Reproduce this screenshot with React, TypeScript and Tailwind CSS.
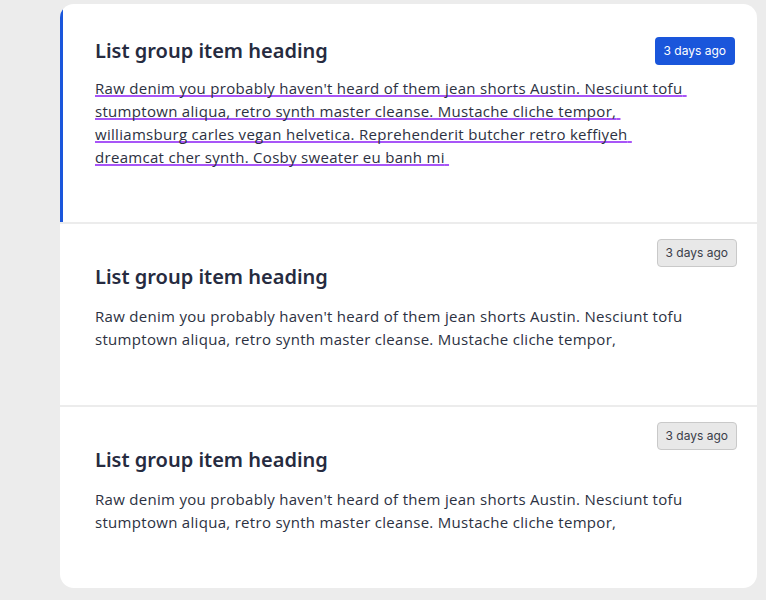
const body =
  "Raw denim you probably haven't heard of them jean shorts Austin. Nesciunt tofu";

type Item = {
  active?: boolean;
  lines: string[];
};

const items: Item[] = [
  {
    active: true,
    lines: [
      body,
      "stumptown aliqua, retro synth master cleanse. Mustache cliche tempor,",
      "williamsburg carles vegan helvetica. Reprehenderit butcher retro keffiyeh",
      "dreamcat cher synth. Cosby sweater eu banh mi",
    ],
  },
  {
    lines: [
      body,
      "stumptown aliqua, retro synth master cleanse. Mustache cliche tempor,",
    ],
  },
  {
    lines: [
      body,
      "stumptown aliqua, retro synth master cleanse. Mustache cliche tempor,",
    ],
  },
];

function Badge({ active }: { active?: boolean }) {
  if (active) {
    return (
      <span className="inline-block rounded-[4px] bg-[#1a56db] px-[9px] py-[6px] text-[12px] leading-4 text-white [font-family:Inter,sans-serif]">
        3 days ago
      </span>
    );
  }
  return (
    <span className="inline-block rounded-[4px] border border-[#c9c9c9] bg-[#e8e8e8] px-[8px] py-[5px] text-[12px] leading-4 text-[#3a3d4a] [font-family:Inter,sans-serif]">
      3 days ago
    </span>
  );
}

export default function App() {
  return (
    <main className="min-h-[600px] bg-[#ececec] pl-[60px] pr-[9px] pt-[4px] pb-[14px]">
      <div className="overflow-hidden rounded-[14px] bg-white text-[#262b40]">
        {items.map((item, i) =>
          item.active ? (
            <div
              key={i}
              className="h-[218px] border-l-[3px] border-[#1a56db] pl-[32px] pr-[22px] pt-[33px]"
            >
              <div className="flex items-center justify-between">
                <h5 className="text-[20px] font-semibold leading-7 [font-family:'Noto_Sans',sans-serif]">
                  List group item heading
                </h5>
                <Badge active />
              </div>
              <p className="mt-[12px] whitespace-nowrap text-[15px] leading-[23px] tracking-[0.3px] text-[#2c3142] [font-family:'Open_Sans',sans-serif]">
                {item.lines.map((l, j) => (
                  <span key={j}>
                    <span className="underline decoration-[#a855f7] decoration-2 underline-offset-[1px] [text-decoration-skip-ink:none]">
                      {l}&nbsp;
                    </span>
                    {j < item.lines.length - 1 && <br />}
                  </span>
                ))}
              </p>
            </div>
          ) : (
            <div
              key={i}
              className="flex h-[183px] flex-col border-t-2 border-[#ececec] pl-[35px] pr-[20px] pt-[15px]"
            >
              <div className="flex justify-end">
                <Badge />
              </div>
              <h5 className="-mt-[4px] text-[20px] font-semibold leading-7 [font-family:'Noto_Sans',sans-serif]">
                List group item heading
              </h5>
              <p className="mt-[14px] text-[15px] leading-[23px] tracking-[0.3px] text-[#2c3142] [font-family:'Open_Sans',sans-serif]">
                {item.lines.map((l, j) => (
                  <span key={j}>
                    {l}
                    {j < item.lines.length - 1 && <br />}
                  </span>
                ))}
              </p>
            </div>
          )
        )}
      </div>
    </main>
  );
}
